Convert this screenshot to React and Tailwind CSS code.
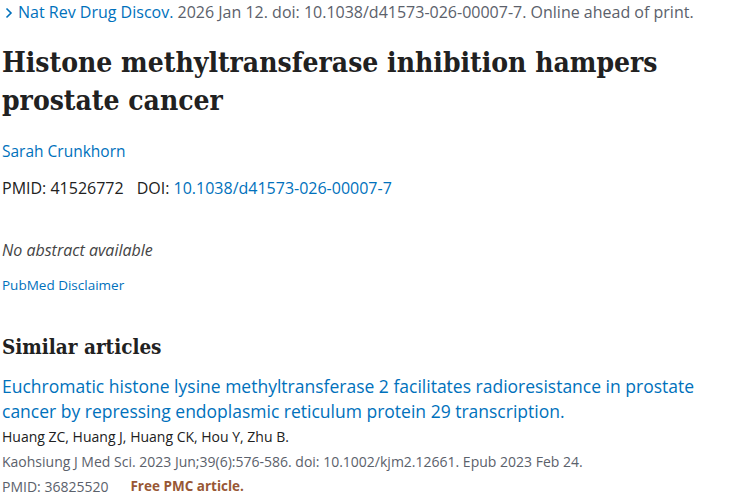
import React from "react";

const sans = "font-['Open_Sans',sans-serif]";
const serif = "font-['DejaVu_Serif',serif]";

export default function App() {
  return (
    <div className={`${sans} bg-white w-[750px] h-[500px] overflow-hidden text-[#212121] pl-[2px]`}>
      {/* Citation line */}
      <div className="h-[26px] pt-[2px] text-[16px] leading-[20px] whitespace-nowrap">
        <span className="text-[#0071bc]">
          <span className="inline-block w-[16px] pl-[3px]">
            <svg width="8" height="12" viewBox="0 0 8 12" className="inline -mt-[2px]">
              <path d="M1.5 1.5 6 6 1.5 10.5" fill="none" stroke="#0071bc" strokeWidth="1.6" />
            </svg>
          </span>
          Nat Rev Drug Discov.
        </span>
        <span className="text-[#5b616b]"> 2026 Jan 12. doi: 10.1038/d41573-026-00007-7. Online ahead of print.</span>
      </div>

      {/* Title */}
      <h1 className={`${serif} font-bold font-stretch-condensed text-[28px] leading-[38px] mt-[18px] text-[#212121]`}>
        Histone methyltransferase inhibition hampers
        <br />
        prostate cancer
      </h1>

      <div className="mt-[21px] text-[15.5px] leading-[20px]">
        <a className="text-[#0071bc]">Sarah Crunkhorn</a>
      </div>

      <div className="mt-[17px] text-[16px] leading-[20px] flex gap-[13px]">
        <span>PMID: 41526772</span>
        <span>
          DOI: <a className="text-[#0071bc]">10.1038/d41573-026-00007-7</a>
        </span>
      </div>

      <div className="mt-[42px] text-[16px] leading-[20px] italic text-[#444]">
        No abstract available
      </div>

      <div className="mt-[16px] text-[13.5px] leading-[18px] text-[#0071bc]">
        PubMed Disclaimer
      </div>

      <h2 className={`${serif} font-bold font-stretch-condensed text-[20.5px] leading-[30px] mt-[38px]`}>
        Similar articles
      </h2>

      <div className="mt-[12px] text-[17.5px] leading-[25px] text-[#0071bc] w-[720px]">
        Euchromatic histone lysine methyltransferase 2 facilitates radioresistance in prostate cancer by repressing
        endoplasmic reticulum protein 29 transcription.
      </div>
      <div className="text-[14px] leading-[25px]">
        Huang ZC, Huang J, Huang CK, Hou Y, Zhu B.
      </div>
      <div className="text-[14px] leading-[25px] text-[#5b616b]">
        Kaohsiung J Med Sci. 2023 Jun;39(6):576-586. doi: 10.1002/kjm2.12661. Epub 2023 Feb 24.
      </div>
      <div className="text-[14px] leading-[25px] text-[#5b616b] flex gap-[22px]">
        <span>PMID: 36825520</span>
        <span className="font-bold text-[13.5px] text-[#985735]">Free PMC article.</span>
      </div>
    </div>
  );
}
